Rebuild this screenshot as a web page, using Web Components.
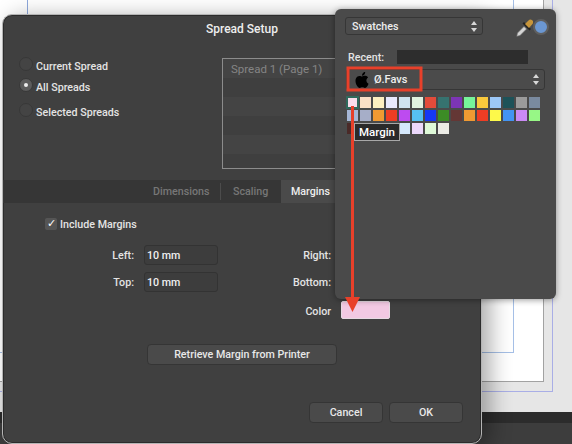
<!DOCTYPE html>
<html>
<head>
<meta charset="utf-8">
<title>Spread Setup</title>
<style>
  html, body { margin: 0; height: 100%; }
  body {
    position: relative;
    width: 572px;
    height: 444px;
    overflow: hidden;
    font: 10.7px Roboto, "Liberation Sans", sans-serif;
    color: #e4e4e4;
  }
</style>
</head>
<body>
<page-backdrop></page-backdrop>
<spread-dialog></spread-dialog>
<swatch-popover></swatch-popover>
<callout-arrow></callout-arrow>

<script>
class PageBackdrop extends HTMLElement {
  constructor() {
    super();
    this.attachShadow({ mode: 'open' }).innerHTML = `
    <style>
      :host { position: absolute; inset: 0; background: #e6e6e6; display: block; overflow: hidden; }
      .page { position: absolute; left: -20px; top: -20px; box-sizing: border-box; }
      .sheet { width: 564px; height: 402px; background: #fff; border: 1px solid #a2a2a2; }
      .bleed { width: 573px; height: 412px; border: 1px solid #a9aee6; }
      .inner { width: 534px; height: 373px; border: 1px solid #a5bfe6; }
      .left { position: absolute; left: 27px; top: 0; width: 1px; height: 20px; background: #8ea8dc; }
      .bar { position: absolute; left: 0; right: 0; top: 412px; height: 32px; background: linear-gradient(#2c2c2c 0 11px, #3d3d3d 11px); }
    </style>
    <div class="page sheet"></div>
    <div class="page bleed"></div>
    <div class="page inner"></div>
    <div class="left"></div>
    <div class="bar"></div>`;
  }
}

class RadioRow extends HTMLElement {
  constructor() {
    super();
    this.attachShadow({ mode: 'open' }).innerHTML = `
    <style>
      :host { display: flex; align-items: center; gap: 3px; height: 14px; }
      i { width: 12px; height: 12px; border-radius: 50%; background: #444; border: 1px solid #383838; position: relative; top: -2px; flex: none; }
      :host([checked]) i { background: #5c5c5c; }
      :host([checked]) i::after { content: ""; position: absolute; left: 4px; top: 4px; width: 4px; height: 4px; border-radius: 50%; background: #eee; }
    </style>
    <i></i><slot></slot>`;
  }
}

class PushButton extends HTMLElement {
  constructor() {
    super();
    this.attachShadow({ mode: 'open' }).innerHTML = `
    <style>
      :host {
        display: flex; align-items: center; justify-content: center; box-sizing: border-box;
        height: 21px; background: #4a4a4a; border: 1px solid #353535; border-radius: 4px;
        color: #e8e8e8; font-weight: 500;
      }
    </style>
    <slot></slot>`;
  }
}

class ValueField extends HTMLElement {
  constructor() {
    super();
    this.attachShadow({ mode: 'open' }).innerHTML = `
    <style>
      :host {
        display: flex; align-items: center; box-sizing: border-box; height: 20px; width: 74px;
        padding: 1px 0 0 2px; background: #3d3d3d; border: 1px solid #333; border-radius: 3px;
        color: #f0f0f0; font-weight: 500;
      }
    </style>
    <slot></slot>`;
  }
}

class TabBar extends HTMLElement {
  constructor() {
    super();
    this.attachShadow({ mode: 'open' }).innerHTML = `
    <style>
      :host { display: flex; align-items: stretch; height: 23px; padding-left: 150px; background: #363636; color: #777; font-weight: 500; }
      span { display: flex; align-items: center; }
      .dim { width: 67px; border-right: 1px solid #4c4c4c; margin: 3px 0; }
      .scale { width: 60px; padding-left: 12px; box-sizing: border-box; }
      .on { width: 80px; padding-left: 10px; box-sizing: border-box; background: #4a4a4a; color: #eee; }
    </style>
    <span class="dim">Dimensions</span>
    <span class="scale">Scaling</span>
    <span class="on">Margins</span>`;
  }
}

class SpreadDialog extends HTMLElement {
  constructor() {
    super();
    this.attachShadow({ mode: 'open' }).innerHTML = `
    <style>
      :host {
        position: absolute; left: 2px; top: 14px; width: 480px; height: 430px; box-sizing: border-box;
        display: flex; flex-direction: column;
        background: #404040; border: 1px solid #b4b4b4; border-radius: 10px; overflow: hidden;
        box-shadow: 8px 3px 22px #0005, inset 0 0 0 1px #2c2c2c;
      }
      h1 { margin: 0; height: 27px; display: flex; align-items: center; justify-content: center; font: inherit; font-weight: 500; font-size: 12px; color: #eee; }
      .top { height: 138px; display: flex; }
      .radios { width: 219px; padding: 17px 0 0 16px; box-sizing: border-box; display: flex; flex-direction: column; gap: 7px; font-weight: 500; }
      .radios radio-row:last-child { margin-top: 4px; }
      .list { margin-top: 16px; width: 190px; height: 111px; box-sizing: border-box; border: 1px solid #8c8c8c; color: #858585; font-size: 11.5px;
        background: repeating-linear-gradient(#444 0 19px, #3f3f3f 19px 38px); }
      .list div { height: 19px; padding-left: 8px; display: flex; align-items: center; }
      .body { flex: 1; display: flex; flex-direction: column; }
      .check { display: flex; align-items: center; gap: 3px; margin: 15px 0 0 42px; height: 12px; font-weight: 500; }
      .box { width: 12px; height: 12px; border-radius: 2px; background: #555; color: #fff; font-size: 11px; line-height: 12px; text-align: center; }
      .grid { display: grid; grid-template-columns: 131px 74px 103px 50px; column-gap: 10px; grid-auto-rows: 20px; row-gap: 7px; margin-top: 15px; align-items: center; font-weight: 500; text-align: right; }
      .swatch { grid-column: 4; height: 18px; background: #f2c9e3; border-radius: 2px; margin-top: 1px; border: 1px solid #e6dbe3; box-sizing: border-box; width: 49px; }
      .colorlabel { grid-column: 3; margin-top: 4px; }
      .retrieve { width: 190px; margin: 25px 0 0 144px; }
      .actions { display: flex; justify-content: flex-end; gap: 6px; padding-right: 18px; margin-top: 37px; }
      .actions push-button { width: 74px; }
    </style>
    <h1>Spread Setup</h1>
    <div class="top">
      <div class="radios">
        <radio-row>Current Spread</radio-row>
        <radio-row checked>All Spreads</radio-row>
        <radio-row>Selected Spreads</radio-row>
      </div>
      <div class="list"><div>Spread 1 (Page 1)</div></div>
    </div>
    <tab-bar></tab-bar>
    <div class="body">
      <div class="check"><span class="box">✓</span>Include Margins</div>
      <div class="grid">
        <span>Left:</span><value-field>10 mm</value-field><span>Right:</span><span></span>
        <span>Top:</span><value-field>10 mm</value-field><span>Bottom:</span><span></span>
        <span class="colorlabel">Color</span><div class="swatch"></div>
      </div>
      <push-button class="retrieve">Retrieve Margin from Printer</push-button>
      <div class="actions">
        <push-button>Cancel</push-button>
        <push-button>OK</push-button>
      </div>
    </div>`;
  }
}

class DropSelect extends HTMLElement {
  constructor() {
    super();
    this.attachShadow({ mode: 'open' }).innerHTML = `
    <style>
      :host {
        display: flex; align-items: center; box-sizing: border-box; padding: 0 5px 0 4px;
        background: #4b4b4b; border: 1px solid #363636; border-radius: 3px; color: #eee; font-weight: 500;
      }
      .label { flex: 1; display: flex; align-items: center; }
      svg { width: 6px; height: 11px; flex: none; }
    </style>
    <div class="label"><slot></slot></div>
    <svg viewBox="0 0 6 11"><path d="M3 0 6 4H0zM3 11 0 7h6z" fill="#d8d8d8"/></svg>`;
  }
}

const SWATCHES = [
  '#fadcec','#fbe0c6','#fdf0c0','#e8eafd','#cfe3ef','#e2f2e0','#e34b3a','#36726f','#7c35b5','#76f59a','#f9c93c','#9cc8f8','#1d5258','#9b9b9b','#7a8a9f',
  '#a6b7d6','#a6aec8','#f09a32','#ee3d24','#bd4bf0','#56c1f2','#1638f5','#3c8c25','#643735','#f09a32','#ee3d24','#fdf94a','#4394f3','#ca8af5','#97f786',
  '#4a2a28','#5a5a5a','#5a5a5a','#5a5a5a','#d5e8fb','#ecd8fb','#dff9d8','#ebebe5'
];

class SwatchGrid extends HTMLElement {
  constructor() {
    super();
    const cells = SWATCHES.map((c, i) => `<b class="${i === 0 ? 'sel' : ''}" style="background:${c}"></b>`).join('');
    this.attachShadow({ mode: 'open' }).innerHTML = `
    <style>
      :host { display: grid; grid-template-columns: repeat(15, 13px); grid-auto-rows: 13px; width: 195px; }
      b { display: block; box-sizing: border-box; border: 0.5px solid #4a4a4a; }
      .sel { border: 2px solid #2f6a5c; }
    </style>
    ${cells}`;
  }
}

class SwatchPopover extends HTMLElement {
  constructor() {
    super();
    this.attachShadow({ mode: 'open' }).innerHTML = `
    <style>
      :host {
        position: absolute; left: 335px; top: 9px; width: 221px; height: 290px; box-sizing: border-box;
        display: flex; flex-direction: column; padding: 8px 11px 0 11px;
        background: #4a4a4a; border-radius: 6px; box-shadow: 0 1px 6px #0006;
      }
      .head { display: flex; align-items: center; height: 18px; }
      .head drop-select { flex: none; width: 138px; height: 18px; margin-left: -1px; padding-left: 6px; }
      .head svg { flex: none; width: 17px; height: 18px; margin: 3px 0 0 33px; }
      .dot { flex: none; box-sizing: border-box; width: 16px; height: 16px; margin-top: 2px; border-radius: 50%; background: #6b97d2; border: 2px solid #5f5f5f; }
      .recent { display: flex; align-items: center; margin: 15px 0 0 2px; height: 14px; font-weight: 500; }
      .recent span { width: 49px; }
      .recent i { width: 131px; height: 14px; background: #2d2d2d; }
      .favs { height: 21px; margin: 5px 0 6px; padding-left: 7px; width: 199px; }
      .favs svg { width: 16px; height: 16px; margin-right: 4px; }
      .favs-name { font-weight: 500; font-size: 11px; }
      .tip {
        position: absolute; left: 19px; top: 114px; box-sizing: border-box; width: 46px; height: 18px;
        display: flex; align-items: center; justify-content: center;
        background: #2a2a2a; border: 1px solid #a8a8a8; color: #fff; font-weight: 500; font-size: 11.5px;
      }
    </style>
    <div class="head">
      <drop-select>Swatches</drop-select>
      <svg viewBox="0 0 17 18">
        <path d="M.8 17.300 1.500 14 8 7.500 10.500 10 4 16.500z" fill="#d4d4d4" stroke="#777" stroke-width=".6"/>
        <path d="M6.500 4.500 13.500 11.500 15 10 8 3z" fill="#222"/>
        <path d="M9 5 12.500 1.500a2.600 2.600 0 0 1 4 3.500L13 9z" fill="#c7953a"/>
      </svg>
      <div class="dot"></div>
    </div>
    <div class="recent"><span>Recent:</span><i></i></div>
    <drop-select class="favs">
      <svg viewBox="0 0 24 24"><path fill="#000" d="M12.152 6.896c-.948 0-2.415-1.078-3.96-1.04-2.04.027-3.91 1.183-4.961 3.014-2.117 3.675-.546 9.103 1.519 12.09 1.013 1.454 2.208 3.09 3.792 3.039 1.52-.065 2.09-.987 3.935-.987 1.831 0 2.35.987 3.96.948 1.637-.026 2.676-1.48 3.676-2.948 1.156-1.688 1.636-3.325 1.662-3.415-.039-.013-3.182-1.221-3.22-4.857-.026-3.04 2.48-4.494 2.597-4.559-1.429-2.09-3.623-2.324-4.39-2.376-2-.156-3.675 1.09-4.61 1.09zM15.53 3.83c.843-1.012 1.4-2.427 1.245-3.83-1.207.052-2.662.805-3.532 1.818-.78.896-1.454 2.338-1.273 3.714 1.338.104 2.715-.688 3.559-1.701"/></svg>
      <span class="favs-name">Ø.Favs</span>
    </drop-select>
    <swatch-grid></swatch-grid>
    <div class="tip">Margin</div>`;
  }
}

class CalloutArrow extends HTMLElement {
  constructor() {
    super();
    this.attachShadow({ mode: 'open' }).innerHTML = `
    <style>
      :host { position: absolute; inset: 0; display: block; pointer-events: none; }
      svg { display: block; }
    </style>
    <svg width="572" height="444" viewBox="0 0 572 444">
      <rect x="348" y="68" width="73" height="22" fill="none" stroke="#e8402a" stroke-width="3"/>
      <path d="M352.500 106V300" stroke="#e8402a" stroke-width="3"/>
      <path d="M345 297h15l-7.500 15z" fill="#e8402a"/>
    </svg>`;
  }
}

customElements.define('page-backdrop', PageBackdrop);
customElements.define('radio-row', RadioRow);
customElements.define('push-button', PushButton);
customElements.define('value-field', ValueField);
customElements.define('tab-bar', TabBar);
customElements.define('spread-dialog', SpreadDialog);
customElements.define('drop-select', DropSelect);
customElements.define('swatch-grid', SwatchGrid);
customElements.define('swatch-popover', SwatchPopover);
customElements.define('callout-arrow', CalloutArrow);
</script>
</body>
</html>
